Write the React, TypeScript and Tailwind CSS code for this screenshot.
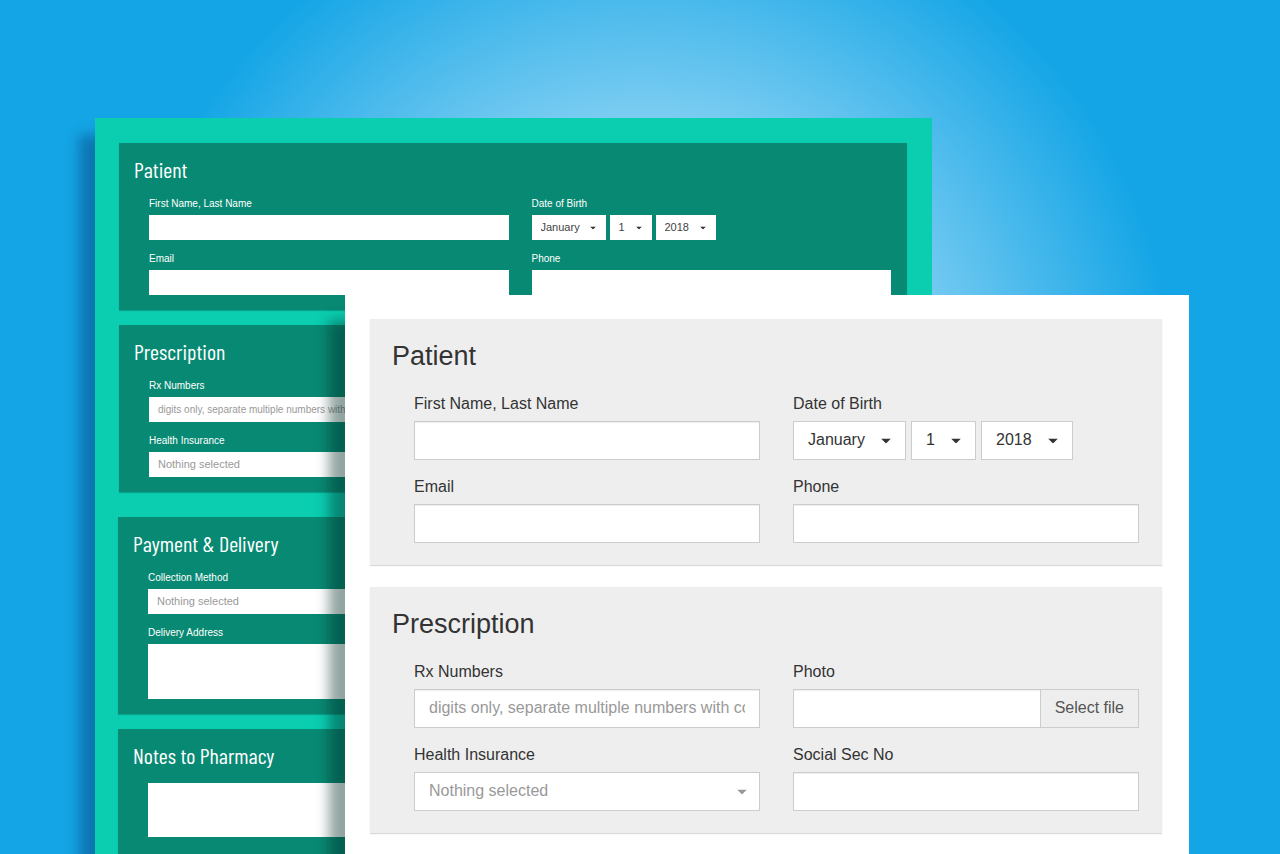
import { createContext, useContext, useId, type ReactNode } from "react";
import { clsx } from "clsx";

type Tone = "green" | "light";

const ToneContext = createContext<Tone>("light");

function Caret({ muted }: { muted?: boolean }) {
  const tone = useContext(ToneContext);
  return (
    <svg
      viewBox="0 0 10 5"
      aria-hidden="true"
      className={clsx(
        "pointer-events-none absolute top-1/2 -translate-y-1/2",
        tone === "green" ? "right-[10px] h-[3px] w-[6px]" : "h-[5px] w-[10px]",
        tone === "light" && (muted ? "right-[13px]" : "right-[15px]"),
        muted ? "fill-[#999999]" : "fill-[#333333]",
      )}
    >
      <path d="M0 0h10L5 5z" />
    </svg>
  );
}

function controlClass(tone: Tone) {
  return tone === "green"
    ? "block w-full rounded-none bg-white px-[9px] text-[#444444] outline-none placeholder:text-[#999999]"
    : "block w-full rounded-none border border-[#cccccc] bg-white px-[14px] text-[16px] text-[#333333] outline-none placeholder:text-[#999999]";
}

function Field({ label, children }: { label: string; children: (id: string) => ReactNode }) {
  const tone = useContext(ToneContext);
  const id = useId();
  return (
    <div className={clsx("flex min-w-0 flex-col", tone === "green" ? "gap-0.5" : "gap-[7px]")}>
      <label
        htmlFor={id}
        className={tone === "green" ? "text-[10px] leading-[18px] text-white" : "text-[16px] leading-5 text-[#333333]"}
      >
        {label}
      </label>
      {children(id)}
    </div>
  );
}

function TextField({ label, placeholder, type = "text" }: { label: string; placeholder?: string; type?: string }) {
  const tone = useContext(ToneContext);
  return (
    <Field label={label}>
      {(id) => (
        <input
          id={id}
          type={type}
          placeholder={placeholder}
          className={clsx(
            controlClass(tone),
            tone === "green"
              ? "h-[25px] text-[10px]"
              : "h-[39px] pb-0.5 shadow-[inset_0_1px_1px_rgba(0,0,0,0.075)]",
          )}
        />
      )}
    </Field>
  );
}

function Select({
  id,
  name,
  options,
  muted,
  className,
}: {
  id?: string;
  name?: string;
  options: string[];
  muted?: boolean;
  className?: string;
}) {
  const tone = useContext(ToneContext);
  return (
    <div className={clsx("relative", className)}>
      <select
        id={id}
        aria-label={name}
        className={clsx(
          controlClass(tone),
          "appearance-none",
          tone === "green" ? "h-[25px] text-[11px]" : "h-[39px] pb-0.5",
          muted && "text-[#999999]!",
        )}
      >
        {options.map((option) => (
          <option key={option}>{option}</option>
        ))}
      </select>
      <Caret muted={muted} />
    </div>
  );
}

function SelectField({ label }: { label: string }) {
  return <Field label={label}>{(id) => <Select id={id} options={["Nothing selected"]} muted />}</Field>;
}

function BirthDateField() {
  const green = useContext(ToneContext) === "green";
  return (
    <Field label="Date of Birth">
      {(id) => (
        <div className={clsx("flex", green ? "gap-1" : "gap-[5px]")}>
          <Select id={id} options={["January"]} className={green ? "w-[74px]" : "w-[113px]"} />
          <Select name="Day" options={["1"]} className={green ? "w-[42px]" : "w-[65px]"} />
          <Select name="Year" options={["2018"]} className={green ? "w-[60px]" : "w-[92px]"} />
        </div>
      )}
    </Field>
  );
}

function PhotoField() {
  return (
    <Field label="Photo">
      {(id) => (
        <div className="flex h-[39px] border border-[#cccccc]">
          <input
            id={id}
            type="text"
            readOnly
            className="min-w-0 flex-1 bg-white px-[14px] text-[16px] shadow-[inset_0_1px_1px_rgba(0,0,0,0.075)] outline-none"
          />
          <button
            type="button"
            className="border-l border-[#cccccc] bg-[#eeeeee] px-[14px] pb-0.5 text-[16px] text-[#555555]"
          >
            Select file
          </button>
        </div>
      )}
    </Field>
  );
}

function Card({ title, children }: { title: string; children: ReactNode }) {
  const tone = useContext(ToneContext);
  if (tone === "green") {
    return (
      <section className="bg-[#088973] pt-[14px] pr-4 pb-[15px] pl-[30px] shadow-[0_1px_1px_rgba(0,0,0,0.2)]">
        <h2 className="-ml-[15px] mb-[14px] font-['Barlow_Condensed','Roboto_Condensed','Liberation_Sans_Narrow','Roboto',sans-serif] text-[22px] leading-6 text-white">
          {title}
        </h2>
        <div className="grid grid-cols-2 gap-x-[23px] gap-y-[10px]">{children}</div>
      </section>
    );
  }
  return (
    <section className="bg-[#eeeeee] pt-[21px] pr-[23px] pb-[22px] pl-11 shadow-[0_1px_1px_rgba(0,0,0,0.15)]">
      <h2 className="-ml-[22px] mb-[22px] text-[27px] leading-8 text-[#333333]">{title}</h2>
      <div className="grid grid-cols-2 gap-x-[33px] gap-y-[17px]">{children}</div>
    </section>
  );
}

function PatientCard() {
  return (
    <Card title="Patient">
      <TextField label="First Name, Last Name" />
      <BirthDateField />
      <TextField label="Email" type="email" />
      <TextField label="Phone" type="tel" />
    </Card>
  );
}

function GreenForm() {
  return (
    <ToneContext.Provider value="green">
      <form className="col-start-1 row-start-1 mt-[118px] mr-[348px] ml-[95px] flex flex-col gap-[25px] bg-[#0bcdb0] pt-[25px] shadow-[-16px_17px_12px_rgba(0,30,80,0.34)]">
        <div className="flex flex-col gap-[15px] pr-[25px] pl-6">
          <PatientCard />
          <Card title="Prescription">
            <div className="col-start-1">
              <TextField label="Rx Numbers" placeholder="digits only, separate multiple numbers with commas" />
            </div>
            <div className="col-start-1">
              <SelectField label="Health Insurance" />
            </div>
          </Card>
        </div>
        <div className="flex flex-col gap-[15px] pr-[26px] pl-[23px]">
          <Card title="Payment & Delivery">
            <div className="col-start-1">
              <SelectField label="Collection Method" />
            </div>
            <div className="col-span-2">
              <Field label="Delivery Address">
                {(id) => <textarea id={id} className="block h-[55px] w-full resize-none bg-white px-[9px] outline-none" />}
              </Field>
            </div>
          </Card>
          <Card title="Notes to Pharmacy">
            <textarea
              aria-label="Notes to Pharmacy"
              className="col-span-2 mt-0.5 mb-4 block h-[54px] w-full resize-none bg-white px-[9px] outline-none"
            />
          </Card>
        </div>
      </form>
    </ToneContext.Provider>
  );
}

function LightForm() {
  return (
    <ToneContext.Provider value="light">
      <form className="z-10 col-start-1 row-start-1 mt-[295px] mr-[91px] ml-[345px] flex flex-col gap-[22px] bg-white pt-6 pr-[27px] pb-6 pl-[25px] shadow-[-16px_25px_12px_rgba(0,45,38,0.43)]">
        <PatientCard />
        <Card title="Prescription">
          <TextField label="Rx Numbers" placeholder="digits only, separate multiple numbers with commas" />
          <PhotoField />
          <SelectField label="Health Insurance" />
          <TextField label="Social Sec No" />
        </Card>
      </form>
    </ToneContext.Provider>
  );
}

export default function App() {
  return (
    <main className="grid h-screen grid-cols-1 overflow-hidden bg-[#14a5e6] bg-[radial-gradient(circle_532px_at_645px_405px,#f4fbff,#14a5e6)] font-['Liberation_Sans',Arial,sans-serif]">
      <GreenForm />
      <LightForm />
    </main>
  );
}
